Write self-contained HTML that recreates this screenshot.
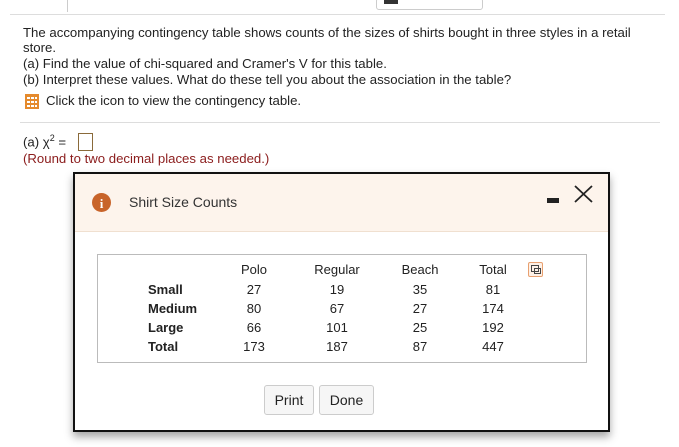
<!DOCTYPE html><html><head><style>
body{margin:0;width:679px;height:447px;background:#fff;font-family:"Liberation Sans",sans-serif;position:relative;overflow:hidden;color:#222}
.a{position:absolute;white-space:nowrap}
.t{font-size:13.2px}
.c{position:absolute;width:60px;text-align:center;font-size:13px}
.b{position:absolute;font-size:13px;font-weight:bold}
</style></head><body>
<div class="a" style="left:67px;top:0;width:1px;height:12px;background:#ccc"></div>
<div class="a" style="left:376px;top:-2px;width:105px;height:10px;border:1px solid #ccc;border-radius:3px"></div>
<div class="a" style="left:384px;top:0;width:14px;height:4px;background:#333"></div>
<div class="a" style="left:10px;top:14px;width:655px;height:1px;background:#ddd"></div>
<div class="a t" style="left:23px;top:25px">The accompanying contingency table shows counts of the sizes of shirts bought in three styles in a retail</div>
<div class="a t" style="left:23px;top:40px">store.</div>
<div class="a t" style="left:23px;top:56px">(a) Find the value of chi-squared and Cramer's V for this table.</div>
<div class="a t" style="left:23px;top:72px">(b) Interpret these values. What do these tell you about the association in the table?</div>
<svg class="a" style="left:25px;top:94px" width="14" height="15"><rect width="14" height="15" fill="#e58a2c"/><g fill="#fff"><rect x="2" y="3" width="3" height="2"/><rect x="6" y="3" width="3" height="2"/><rect x="10" y="3" width="2" height="2"/><rect x="2" y="7" width="3" height="2"/><rect x="6" y="7" width="3" height="2"/><rect x="10" y="7" width="2" height="2"/><rect x="2" y="11" width="3" height="2"/><rect x="6" y="11" width="3" height="2"/><rect x="10" y="11" width="2" height="2"/></g></svg>
<div class="a t" style="left:46px;top:93px">Click the icon to view the contingency table.</div>
<div class="a" style="left:20px;top:122px;width:640px;height:1px;background:#ddd"></div>
<div class="a t" style="left:23px;top:133px">(a) χ<sup style="font-size:9px">2</sup> =</div>
<div class="a" style="left:78px;top:133px;width:13px;height:16px;border:1px solid #8a6a3a"></div>
<div class="a t" style="left:23px;top:151px;color:#8b1c1c">(Round to two decimal places as needed.)</div>
<div class="a" style="left:73px;top:172px;width:533px;height:256px;border:2px solid #111;background:#fff;box-shadow:0 5px 8px rgba(0,0,0,.35)"></div>
<div class="a" style="left:75px;top:174px;width:533px;height:57px;background:#fdf4ec;border-bottom:1px solid #f0e0d0"></div>
<svg class="a" style="left:92px;top:193px" width="19" height="19"><circle cx="9.5" cy="9.5" r="9.5" fill="#c8642a"/><text x="9.5" y="15" fill="#fff" font-size="13" font-weight="bold" text-anchor="middle" font-family="Liberation Serif">i</text></svg>
<div class="a" style="left:129px;top:194px;font-size:14px;color:#333">Shirt Size Counts</div>
<div class="a" style="left:547px;top:198px;width:12px;height:5px;background:#222"></div>
<svg class="a" style="left:574px;top:185px" width="19" height="18"><path d="M1 1L18 17M18 1L1 17" stroke="#222" stroke-width="1.8"/></svg>
<div class="a" style="left:97px;top:254px;width:488px;height:107px;border:1px solid #bbb"></div>
<div class="c" style="left:224px;top:262px">Polo</div><div class="c" style="left:307px;top:262px">Regular</div><div class="c" style="left:390px;top:262px">Beach</div><div class="c" style="left:463px;top:262px">Total</div>
<div class="a" style="left:528px;top:262px;width:13px;height:13px;border:1px solid #e8a070;border-radius:2px;background:#fdf0e6"><div style="position:absolute;left:2px;top:2px;width:6px;height:5px;border:1px solid #444"></div><div style="position:absolute;left:5px;top:5px;width:5px;height:4px;border:1px solid #444"></div></div>
<div class="b" style="left:148px;top:282px">Small</div><div class="b" style="left:148px;top:301px">Medium</div><div class="b" style="left:148px;top:320px">Large</div><div class="b" style="left:148px;top:339px">Total</div>
<div class="c" style="left:224px;top:282px">27</div><div class="c" style="left:307px;top:282px">19</div><div class="c" style="left:390px;top:282px">35</div><div class="c" style="left:463px;top:282px">81</div>
<div class="c" style="left:224px;top:301px">80</div><div class="c" style="left:307px;top:301px">67</div><div class="c" style="left:390px;top:301px">27</div><div class="c" style="left:463px;top:301px">174</div>
<div class="c" style="left:224px;top:320px">66</div><div class="c" style="left:307px;top:320px">101</div><div class="c" style="left:390px;top:320px">25</div><div class="c" style="left:463px;top:320px">192</div>
<div class="c" style="left:224px;top:339px">173</div><div class="c" style="left:307px;top:339px">187</div><div class="c" style="left:390px;top:339px">87</div><div class="c" style="left:463px;top:339px">447</div>
<div class="a" style="left:264px;top:385px;width:48px;height:28px;border:1px solid #ccc;border-radius:3px;background:#f6f6f6;font-size:14px;text-align:center;line-height:28px">Print</div>
<div class="a" style="left:319px;top:385px;width:53px;height:28px;border:1px solid #ccc;border-radius:3px;background:#f6f6f6;font-size:14px;text-align:center;line-height:28px">Done</div>
</body></html>
